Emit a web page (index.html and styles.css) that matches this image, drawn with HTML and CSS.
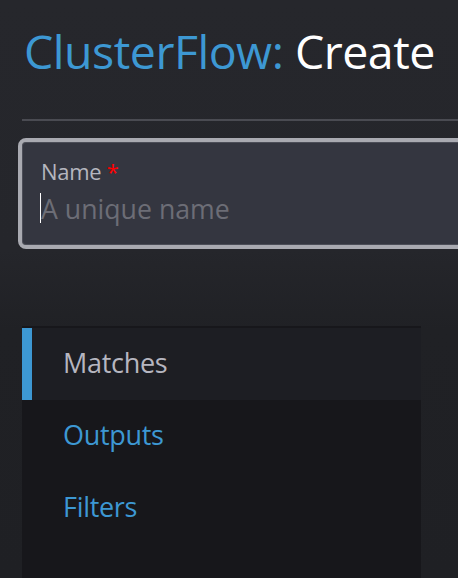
FILE: index.html
```html
<!DOCTYPE html>
<html lang="en">
<head>
<meta charset="utf-8">
<title>ClusterFlow: Create</title>
<link rel="stylesheet" href="styles.css">
</head>
<body>
<div class="page">
  <h1 class="title"><span class="title-type">ClusterFlow:</span> <span class="title-mode">Create</span></h1>
  <div class="divider"></div>
  <div class="field">
    <label class="field-label" for="name">Name <span class="required">*</span></label>
    <span class="input-wrap"><input class="field-input" id="name" type="text" placeholder="A unique name"></span>
  </div>
  <div class="tabs">
    <ul class="tab-list">
      <li class="tab active"><span class="tab-text">Matches</span></li>
      <li class="tab"><span class="tab-text">Outputs</span></li>
      <li class="tab"><span class="tab-text">Filters</span></li>
    </ul>
  </div>
</div>
</body>
</html>
```
FILE: styles.css
```css
html, body {
  margin: 0;
  padding: 0;
  height: 100%;
}
body {
  background: linear-gradient(180deg, #26272c 0px, #25262b 250px, #202125 330px, #1f2024 578px);
  font-family: "Open Sans", "Noto Sans", sans-serif;
  overflow: hidden;
}
.page {
  padding-left: 22px;
  display: flex;
  flex-direction: column;
  height: 100%;
}
.title {
  margin: 0;
  padding: 18px 0 0 2px;
  font-size: 46.5px;
  font-weight: 400;
  line-height: 66px;
  letter-spacing: -0.5px;
  white-space: nowrap;
}
.title-type { color: #3d98d3; }
.title-mode { color: #ffffff; }
.divider {
  margin-top: 35px;
  height: 2px;
  background: #4a4b52;
}
.field {
  margin-top: 21px;
  height: 103px;
  box-sizing: border-box;
  background: #343640;
  border: 1px solid #4c4e58;
  border-right: none;
  border-radius: 4px 0 0 4px;
  outline: 4px solid #a9aab1;
  outline-offset: 0;
  padding: 13px 0 0 18px;
  display: flex;
  flex-direction: column;
}
.field-label {
  font-size: 22px;
  line-height: 30px;
  color: #b5b6bf;
  letter-spacing: -0.3px;
}
.required { color: #ff0000; }
.input-wrap {
  position: relative;
  margin-top: 6px;
  display: block;
}
.input-wrap::before {
  content: "";
  position: absolute;
  left: -1px;
  top: 1px;
  width: 1px;
  height: 30px;
  background: #ffffff;
}
.field-input {
  display: block;
  background: transparent;
  border: none;
  outline: none;
  padding: 0;
  font-family: inherit;
  font-size: 26.7px;
  line-height: 34px;
  color: #ffffff;
  width: 100%;
}
.field-input::placeholder { color: #6c6d76; }
.tabs {
  margin-top: 81px;
  width: 399px;
  flex: 1;
  background: #17171b;
  border-top: 2px solid #17171b;
}
.tab-list {
  list-style: none;
  margin: 0;
  padding: 0;
}
.tab {
  height: 72px;
  box-sizing: border-box;
  padding-bottom: 3px;
  display: flex;
  align-items: center;
  padding-left: 41px;
  font-size: 27px;
  color: #3d98d3;
  letter-spacing: -0.3px;
}
.tab.active {
  background: #1d1e23;
  color: #b6b6c0;
  box-shadow: inset 10px 0 0 #3d98d3;
}
```
